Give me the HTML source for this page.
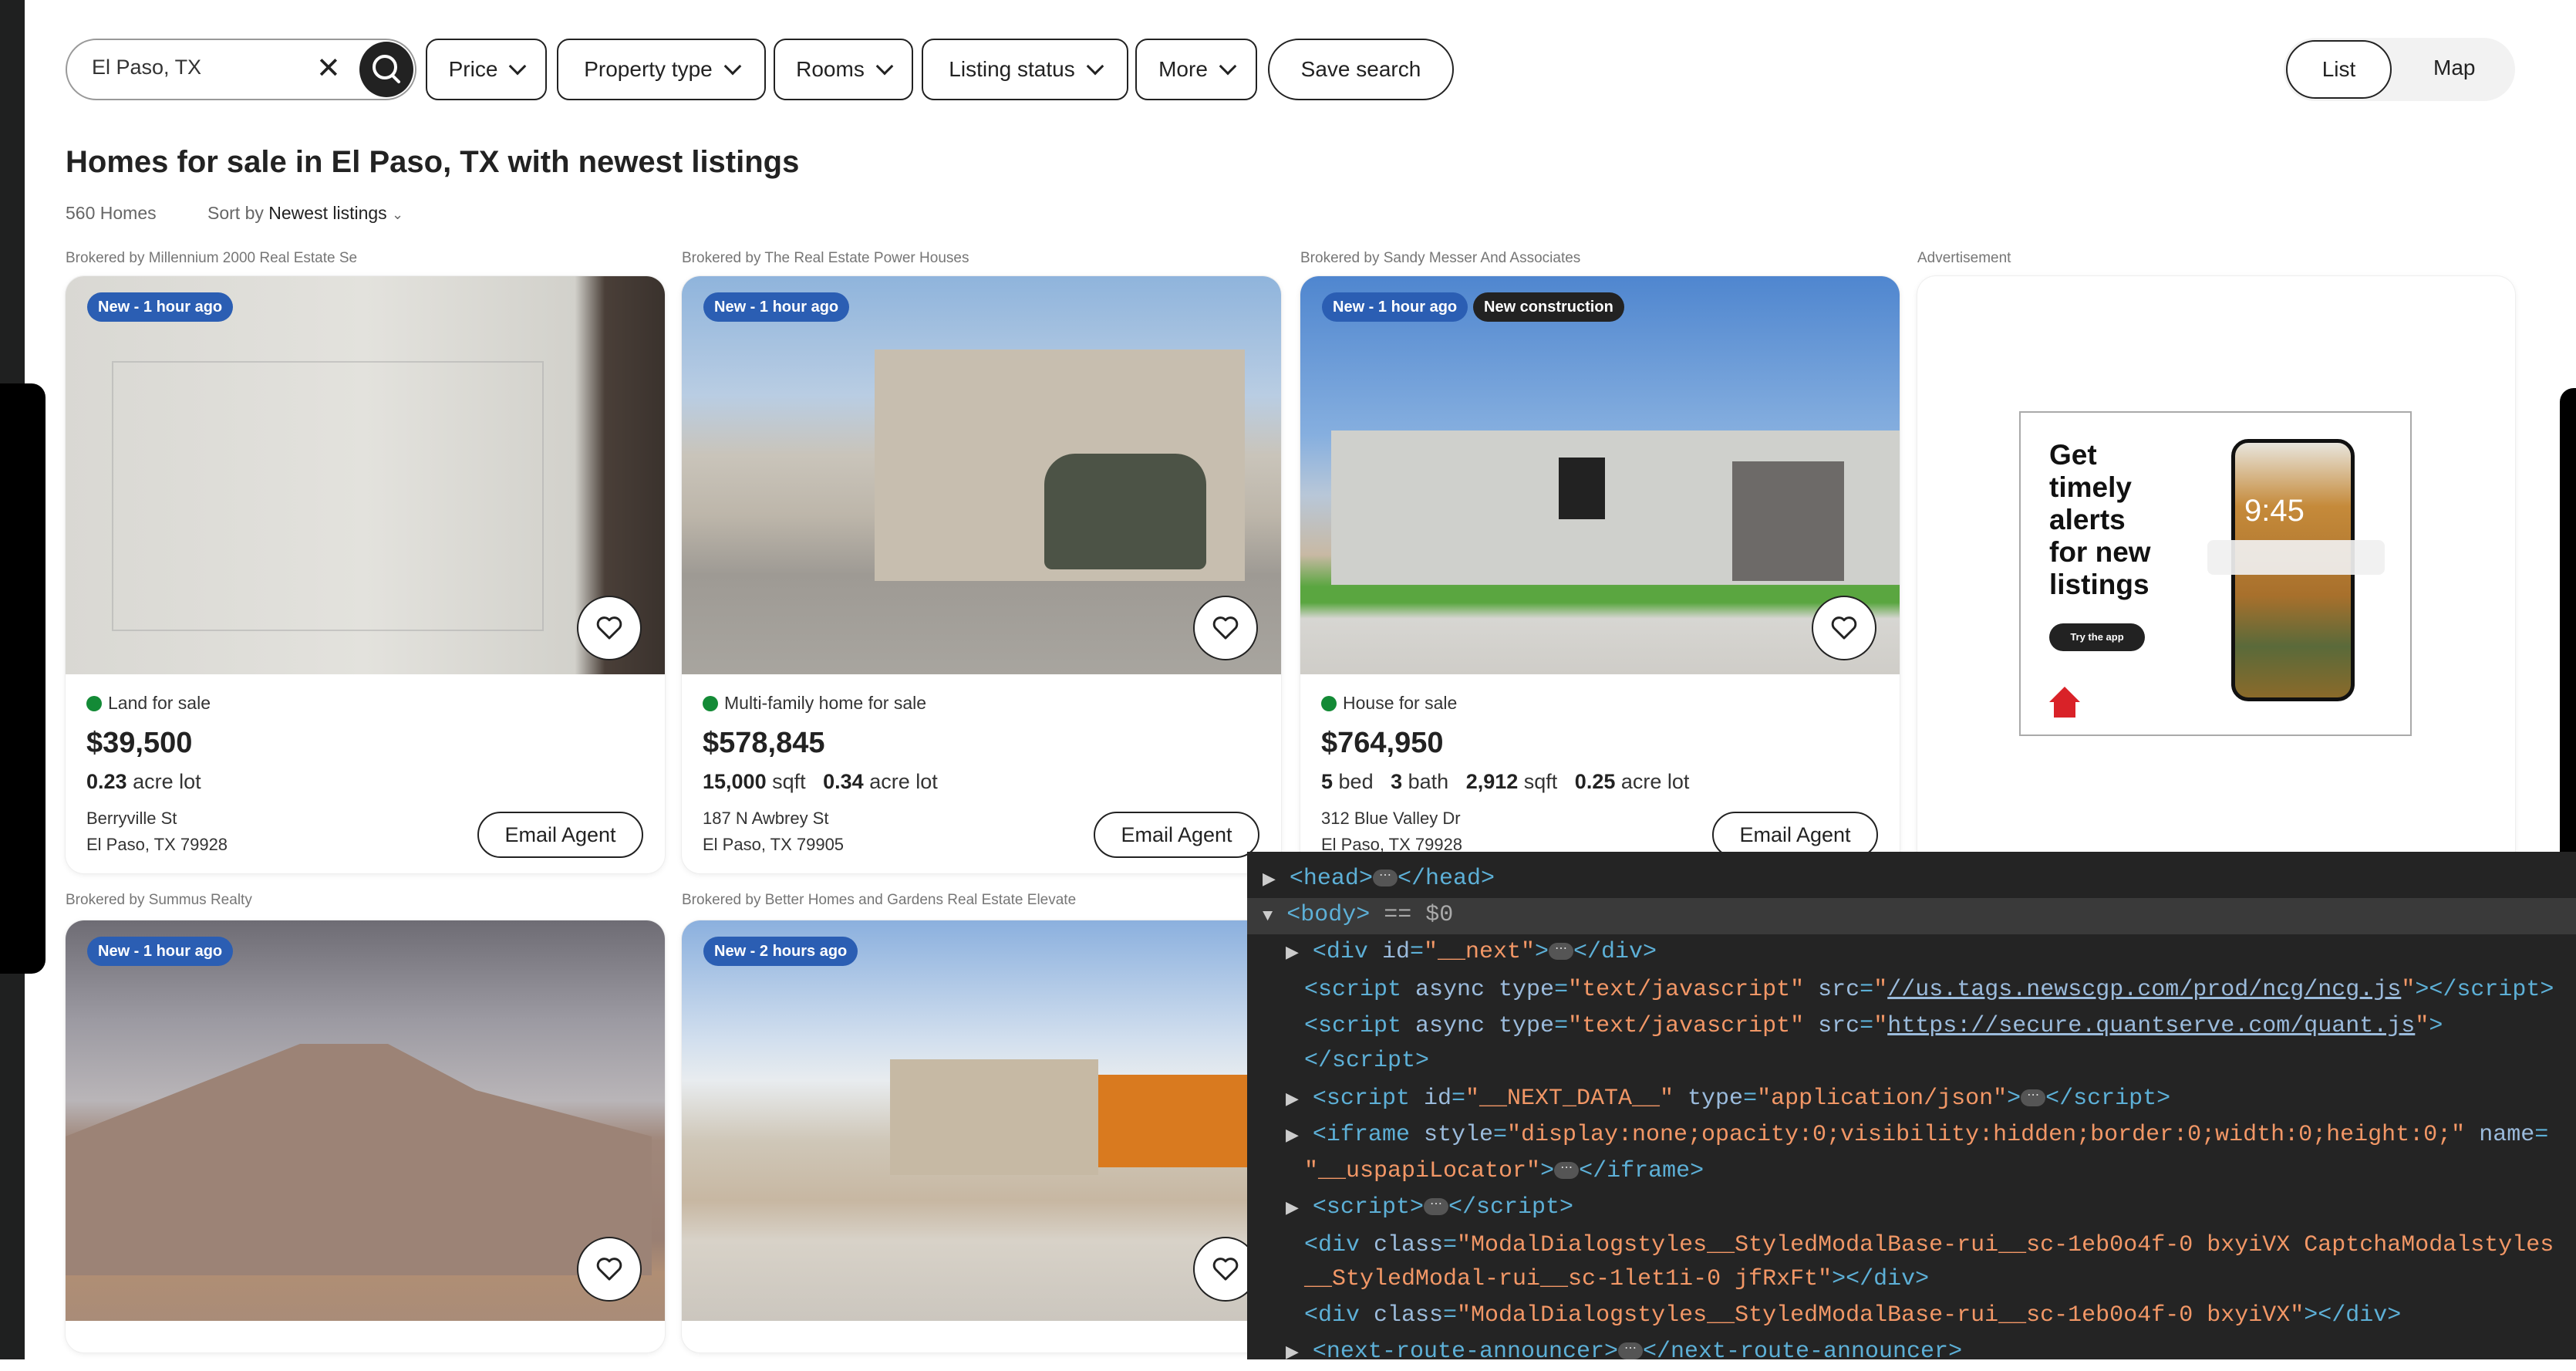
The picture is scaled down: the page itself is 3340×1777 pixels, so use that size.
<!DOCTYPE html>
<html><head><meta charset="utf-8"><style>
*{box-sizing:border-box;margin:0;padding:0}
body{width:3340px;height:1762px;overflow:hidden;background:#fff;font-family:"Liberation Sans",Arial,sans-serif;color:#222;position:relative}
.abs{position:absolute}
.pill{position:absolute;top:50px;height:80px;border:2px solid #222;border-radius:16px;display:flex;align-items:center;justify-content:center;font-size:28px;color:#222;gap:18px}
.chev{width:16px;height:16px;border-right:3px solid #222;border-bottom:3px solid #222;transform:rotate(45deg);margin-top:-8px}
.brk{position:absolute;font-size:19px;color:#767676}
.card{position:absolute;width:777px;border-radius:24px;box-shadow:0 0 0 1px #eee,0 2px 8px rgba(0,0,0,.08);overflow:hidden;background:#fff}
.img{position:relative;height:516px;overflow:hidden}
.bd{position:relative;height:258px}
.badge{position:absolute;top:21px;height:38px;border-radius:19px;background:#2b5eb3;color:#fff;font-weight:bold;font-size:20px;line-height:38px;padding:0 14px}
.heart{position:absolute;right:30px;width:84px;height:84px;border-radius:50%;background:#fff;border:2px solid #222;display:flex;align-items:center;justify-content:center}
.st{position:absolute;left:27px;top:24px;font-size:23px;color:#333;display:flex;align-items:center;gap:8px}
.dot{width:20px;height:20px;border-radius:50%;background:#138a36}
.price{position:absolute;left:27px;top:68px;font-size:38px;font-weight:bold}
.specs{position:absolute;left:27px;top:124px;font-size:27px;color:#333}
.specs b{color:#222}
.addr{position:absolute;left:27px;top:170px;font-size:22px;line-height:34px;color:#333}
.email{position:absolute;right:28px;top:178px;width:215px;height:60px;border:2px solid #222;border-radius:30px;font-size:27px;display:flex;align-items:center;justify-content:center}
.dev{position:absolute;left:1617px;top:1104px;width:1723px;height:658px;background:#242424;font-family:"Liberation Mono",monospace;font-size:30px;color:#5db0d7;white-space:pre}
.dev div{position:absolute;height:47px;line-height:47px}
.an{color:#9bbbdc}.av{color:#f29766}.u{color:#9bbbdc;text-decoration:underline}.g{color:#aaa}
.el{display:inline-block;width:32px;height:22px;border-radius:11px;background:#555;vertical-align:middle;color:#ddd;font-size:16px;line-height:16px;text-align:center}
.tri{color:#ccc;font-size:22px}
</style></head><body>
<div class="abs" style="left:0;top:0;width:32px;height:1762px;background:#1f2020"></div>
<div class="abs" style="left:0;top:497px;width:59px;height:765px;background:#000;border-radius:0 18px 18px 0"></div>
<div class="abs" style="left:3319px;top:503px;width:21px;height:754px;background:#000;border-radius:18px 0 0 18px"></div>

<div class="abs" style="left:85px;top:50px;width:455px;height:80px;border:2px solid #999;border-radius:40px"></div>
<div class="abs" style="left:119px;top:72px;font-size:27px;color:#333">El Paso, TX</div>
<div class="abs" style="left:410px;top:66px;font-size:38px;color:#222">✕</div>
<div class="abs" style="left:466px;top:54px;width:70px;height:72px;border-radius:50%;background:#222">
<svg width="70" height="72" viewBox="0 0 70 72"><circle cx="33" cy="33" r="14" fill="none" stroke="#fff" stroke-width="4"/><line x1="43" y1="44" x2="51" y2="52" stroke="#fff" stroke-width="4" stroke-linecap="round"/></svg></div>
<div class="pill" style="left:552px;width:157px">Price<span class="chev"></span></div>
<div class="pill" style="left:722px;width:271px">Property type<span class="chev"></span></div>
<div class="pill" style="left:1003px;width:181px">Rooms<span class="chev"></span></div>
<div class="pill" style="left:1195px;width:268px">Listing status<span class="chev"></span></div>
<div class="pill" style="left:1472px;width:158px">More<span class="chev"></span></div>
<div class="pill" style="left:1644px;width:241px;border-radius:40px">Save search</div>
<div class="abs" style="left:2961px;top:49px;width:300px;height:82px;background:#f2f2f2;border-radius:41px"></div>
<div class="abs" style="left:2964px;top:52px;width:137px;height:76px;background:#fff;border:2px solid #222;border-radius:38px;font-size:28px;display:flex;align-items:center;justify-content:center">List</div>
<div class="abs" style="left:3155px;top:72px;font-size:28px">Map</div>

<div class="abs" style="left:85px;top:188px;font-size:40px;font-weight:bold">Homes for sale in El Paso, TX with newest listings</div>
<div class="abs" style="left:85px;top:263px;font-size:23px;color:#666">560 Homes</div>
<div class="abs" style="left:269px;top:263px;font-size:23px;color:#666">Sort by <span style="color:#222">Newest listings</span> <span style="font-size:18px">⌄</span></div>

<div class="brk" style="left:85px;top:324px">Brokered by Millennium 2000 Real Estate Se</div>
<div class="brk" style="left:884px;top:324px">Brokered by The Real Estate Power Houses</div>
<div class="brk" style="left:1686px;top:324px">Brokered by Sandy Messer And Associates</div>
<div class="brk" style="left:2486px;top:324px">Advertisement</div>

<!-- card 1 -->
<div class="card" style="left:85px;top:358px;height:774px">
<div class="img" style="background:linear-gradient(90deg,#d9d8d3 0%,#e3e2dd 50%,#d2d1cb 85%,#4a3f38 90%,#3a322d 100%)">
<div class="abs" style="left:60px;top:110px;width:560px;height:350px;border:2px solid #aaa;opacity:.5"></div>
<div class="badge" style="left:28px">New - 1 hour ago</div>
<div class="heart" style="top:414px"><svg width="36" height="32" viewBox="0 0 24 22"><path d="M12 20 L3 11 A5 5 0 0 1 12 4 A5 5 0 0 1 21 11 Z" fill="none" stroke="#222" stroke-width="2" stroke-linejoin="round"/></svg></div>
</div>
<div class="bd">
<div class="st"><span class="dot"></span>Land for sale</div>
<div class="price">$39,500</div>
<div class="specs"><b>0.23</b> acre lot</div>
<div class="addr">Berryville St<br>El Paso, TX 79928</div>
<div class="email">Email Agent</div>
</div></div>

<!-- card 2 -->
<div class="card" style="left:884px;top:358px;height:774px">
<div class="img" style="background:linear-gradient(180deg,#8fb4dc 0%,#b9cde3 30%,#c9c4ba 45%,#bdb6aa 60%,#9e9a94 75%,#a8a59f 100%)">
<div class="abs" style="left:250px;top:95px;width:480px;height:300px;background:#c7beaf"></div>
<div class="abs" style="left:470px;top:230px;width:210px;height:150px;background:#4c5346;border-radius:40px 40px 10px 10px"></div>
<div class="badge" style="left:28px">New - 1 hour ago</div>
<div class="heart" style="top:414px"><svg width="36" height="32" viewBox="0 0 24 22"><path d="M12 20 L3 11 A5 5 0 0 1 12 4 A5 5 0 0 1 21 11 Z" fill="none" stroke="#222" stroke-width="2" stroke-linejoin="round"/></svg></div>
</div>
<div class="bd">
<div class="st"><span class="dot"></span>Multi-family home for sale</div>
<div class="price">$578,845</div>
<div class="specs"><b>15,000</b> sqft &nbsp; <b>0.34</b> acre lot</div>
<div class="addr">187 N Awbrey St<br>El Paso, TX 79905</div>
<div class="email">Email Agent</div>
</div></div>

<!-- card 3 -->
<div class="card" style="left:1686px;top:358px;height:774px">
<div class="img" style="background:linear-gradient(180deg,#4f86cf 0%,#86afdf 40%,#b8c7d8 55%,#c8b9a4 70%,#5aa640 78%,#5aa640 82%,#d7d6d2 86%,#cfcdc8 100%)">
<div class="abs" style="left:40px;top:200px;width:740px;height:200px;background:#cfd0cc"></div>
<div class="abs" style="left:560px;top:240px;width:145px;height:155px;background:#6d6a68"></div>
<div class="abs" style="left:335px;top:235px;width:60px;height:80px;background:#222"></div>
<div class="badge" style="left:28px">New - 1 hour ago</div>
<div class="badge" style="left:224px;background:#222">New construction</div>
<div class="heart" style="top:414px"><svg width="36" height="32" viewBox="0 0 24 22"><path d="M12 20 L3 11 A5 5 0 0 1 12 4 A5 5 0 0 1 21 11 Z" fill="none" stroke="#222" stroke-width="2" stroke-linejoin="round"/></svg></div>
</div>
<div class="bd">
<div class="st"><span class="dot"></span>House for sale</div>
<div class="price">$764,950</div>
<div class="specs"><b>5</b> bed &nbsp; <b>3</b> bath &nbsp; <b>2,912</b> sqft &nbsp; <b>0.25</b> acre lot</div>
<div class="addr">312 Blue Valley Dr<br>El Paso, TX 79928</div>
<div class="email">Email Agent</div>
</div></div>

<!-- ad -->
<div class="card" style="left:2486px;top:358px;width:775px;height:800px">
<div class="abs" style="left:132px;top:175px;width:509px;height:421px;border:2px solid #aaa;background:#fff">
<div class="abs" style="left:37px;top:34px;font-size:37px;font-weight:bold;line-height:42px;color:#111">Get<br>timely<br>alerts<br>for new<br>listings</div>
<div class="abs" style="left:37px;top:273px;width:124px;height:36px;border-radius:18px;background:#222;color:#fff;font-size:13px;font-weight:bold;line-height:36px;text-align:center">Try the app</div>
<div class="abs" style="left:37px;top:355px;width:40px;height:40px;background:#d92228;clip-path:polygon(50% 0,100% 50%,85% 50%,85% 100%,15% 100%,15% 50%,0 50%)"></div>
<div class="abs" style="left:273px;top:34px;width:160px;height:340px;border-radius:22px;background:linear-gradient(180deg,#e8e5dc 0%,#c58a3a 25%,#a8702c 60%,#5a6a3a 80%,#8a6a2a 100%);border:5px solid #111"></div>
<div class="abs" style="left:290px;top:105px;color:#fff;font-size:40px">9:45</div>
<div class="abs" style="left:242px;top:165px;width:230px;height:45px;background:rgba(240,240,240,.92);border-radius:8px"></div>
</div>
</div>

<!-- row 2 -->
<div class="brk" style="left:85px;top:1156px">Brokered by Summus Realty</div>
<div class="brk" style="left:884px;top:1156px">Brokered by Better Homes and Gardens Real Estate Elevate</div>
<div class="card" style="left:85px;top:1193px;height:560px">
<div class="img" style="height:519px;background:linear-gradient(180deg,#6e6c74 0%,#9c9aa2 25%,#b9b5b8 45%,#a0877a 55%,#9a8073 80%,#b08e74 88%,#a98c78 100%)">
<div class="abs" style="left:0;top:160px;width:760px;height:300px;background:#9c8376;clip-path:polygon(0 40%,20% 20%,40% 0,55% 0,70% 20%,100% 40%,100% 100%,0 100%)"></div>
<div class="badge" style="left:28px">New - 1 hour ago</div>
<div class="heart" style="top:410px"><svg width="36" height="32" viewBox="0 0 24 22"><path d="M12 20 L3 11 A5 5 0 0 1 12 4 A5 5 0 0 1 21 11 Z" fill="none" stroke="#222" stroke-width="2" stroke-linejoin="round"/></svg></div>
</div></div>
<div class="card" style="left:884px;top:1193px;height:560px">
<div class="img" style="height:519px;background:linear-gradient(180deg,#8bb0de 0%,#d2dfee 30%,#e8ecef 40%,#cfc7b8 55%,#c7b7a2 70%,#d8d2c8 80%,#cbc6be 100%)">
<div class="abs" style="left:270px;top:180px;width:270px;height:150px;background:#c6b9a4"></div>
<div class="abs" style="left:540px;top:200px;width:240px;height:120px;background:#d97a1f"></div>
<div class="badge" style="left:28px">New - 2 hours ago</div>
<div class="heart" style="top:410px"><svg width="36" height="32" viewBox="0 0 24 22"><path d="M12 20 L3 11 A5 5 0 0 1 12 4 A5 5 0 0 1 21 11 Z" fill="none" stroke="#222" stroke-width="2" stroke-linejoin="round"/></svg></div>
</div></div>

<!-- devtools -->
<div class="dev">
<div style="left:0;top:60px;width:1723px;height:47px;background:#3a3a3a"></div>
<div style="left:20px;top:12px"><span class="tri">▶</span> &lt;head&gt;<span class="el">⋯</span>&lt;/head&gt;</div>
<div style="left:20px;top:59px"><span class="tri">▼</span> &lt;body&gt; <span class="g">== $0</span></div>
<div style="left:50px;top:107px"><span class="tri">▶</span> &lt;div <span class="an">id</span>=<span class="av">"__next"</span>&gt;<span class="el">⋯</span>&lt;/div&gt;</div>
<div style="left:74px;top:156px">&lt;script <span class="an">async type</span>=<span class="av">"text/javascript"</span> <span class="an">src</span>=<span class="av">"<span class="u">//us.tags.newscgp.com/prod/ncg/ncg.js</span>"</span>&gt;&lt;/script&gt;</div>
<div style="left:74px;top:203px">&lt;script <span class="an">async type</span>=<span class="av">"text/javascript"</span> <span class="an">src</span>=<span class="av">"<span class="u">https://secure.quantserve.com/quant.js</span>"</span>&gt;</div>
<div style="left:74px;top:248px">&lt;/script&gt;</div>
<div style="left:50px;top:297px"><span class="tri">▶</span> &lt;script <span class="an">id</span>=<span class="av">"__NEXT_DATA__"</span> <span class="an">type</span>=<span class="av">"application/json"</span>&gt;<span class="el">⋯</span>&lt;/script&gt;</div>
<div style="left:50px;top:344px"><span class="tri">▶</span> &lt;iframe <span class="an">style</span>=<span class="av">"display:none;opacity:0;visibility:hidden;border:0;width:0;height:0;"</span> <span class="an">name</span>=</div>
<div style="left:74px;top:391px"><span class="av">"__uspapiLocator"</span>&gt;<span class="el">⋯</span>&lt;/iframe&gt;</div>
<div style="left:50px;top:438px"><span class="tri">▶</span> &lt;script&gt;<span class="el">⋯</span>&lt;/script&gt;</div>
<div style="left:74px;top:487px">&lt;div <span class="an">class</span>=<span class="av">"ModalDialogstyles__StyledModalBase-rui__sc-1eb0o4f-0 bxyiVX CaptchaModalstyles</span></div>
<div style="left:74px;top:531px"><span class="av">__StyledModal-rui__sc-1let1i-0 jfRxFt"</span>&gt;&lt;/div&gt;</div>
<div style="left:74px;top:578px">&lt;div <span class="an">class</span>=<span class="av">"ModalDialogstyles__StyledModalBase-rui__sc-1eb0o4f-0 bxyiVX"</span>&gt;&lt;/div&gt;</div>
<div style="left:50px;top:625px"><span class="tri">▶</span> &lt;next-route-announcer&gt;<span class="el">⋯</span>&lt;/next-route-announcer&gt;</div>
</div>
</body></html>
